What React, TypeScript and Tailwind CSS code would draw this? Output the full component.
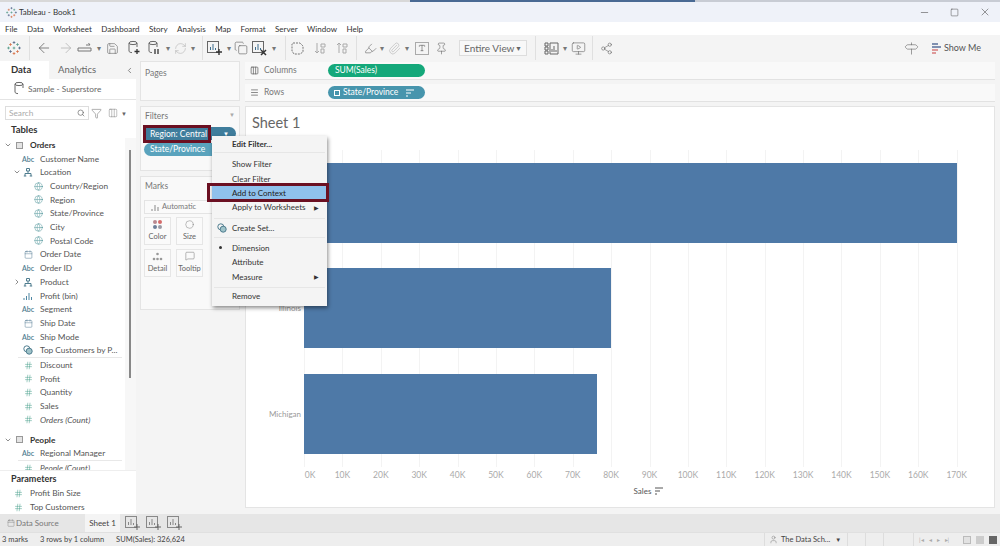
import React from 'react';
import {
  ArrowLeft, ArrowRight, ChevronDown, ChevronLeft, ChevronRight, Copy, Filter, Globe, Hash, Minus, MonitorPlay,
  Paperclip, Pin, RefreshCw, Save, Search, Share2, Signpost, Square, User, X, Calendar, Columns3, Menu as MenuIcon,
  MessageSquare, Circle, Highlighter, Type,
} from 'lucide-react';

const FONT = "font-['Lato','Open_Sans',sans-serif]";

const menus = ['File', 'Data', 'Worksheet', 'Dashboard', 'Story', 'Analysis', 'Map', 'Format', 'Server', 'Window', 'Help'];
const ticks = ['0K', '10K', '20K', '30K', '40K', '50K', '60K', '70K', '80K', '90K', '100K', '110K', '120K', '130K', '140K', '150K', '160K', '170K'];
const bars = [
  { name: '', sales: 170000 },
  { name: 'Illinois', sales: 80000 },
  { name: 'Michigan', sales: 76300 },
];

function Logo({ size = 14 }: { size?: number }) {
  const c = [[7, 1.5], [7, 12.5], [1.5, 7], [12.5, 7], [3.5, 3.5], [10.5, 3.5], [3.5, 10.5], [10.5, 10.5], [7, 7]];
  return (
    <svg width={size} height={size} viewBox="0 0 14 14">
      {c.map(([x, y], i) => (
        <g key={i} stroke={i % 3 === 0 ? '#5b6f8f' : i % 3 === 1 ? '#d9774f' : '#5fa08f'} strokeWidth="0.9">
          <path d={`M${x - 1.3} ${y}H${x + 1.3}M${x} ${y - 1.3}V${y + 1.3}`} />
        </g>
      ))}
    </svg>
  );
}

function Dot() {
  return <span className="w-[12px] flex justify-center text-[8px] text-[#777]">▾</span>;
}

function Sep({ m = 7 }: { m?: number }) {
  return <div className="w-px h-[24px] bg-[#e0e0e0]" style={{ marginLeft: m, marginRight: m }} />;
}

function Db({ badge }: { badge: string }) {
  return (
    <svg width="15" height="16" viewBox="0 0 15 16" fill="none" stroke="#666" strokeWidth="1">
      <ellipse cx="6" cy="3" rx="4" ry="1.6" />
      <path d="M2 3v8c0 1 1.5 1.6 3 1.6M10 3v4" />
      {badge === 'plus' && <path d="M10 9v5M7.5 11.5h5" stroke="#333" strokeWidth="1.3" />}
      {badge === 'pause' && <path d="M8 9v5M11 9v5" stroke="#333" strokeWidth="1.3" />}
    </svg>
  );
}

function ChartBox({ badge, light }: { badge: string; light?: boolean }) {
  return (
    <svg width="17" height="17" viewBox="0 0 17 17" fill="none" stroke={light ? '#888' : '#666'} strokeWidth="1">
      <rect x="1.5" y="1.5" width="11" height="11" />
      <path d="M4.5 10V7M7 10V4M9.5 10V8" stroke={light ? '#888' : '#3f6f8f'} />
      {badge === 'plus' && <path d="M13 9v6M10 12h6" stroke={light ? '#666' : '#333'} strokeWidth={light ? 1 : 1.4} />}
      {badge === 'x' && <path d="M10 10l5 5M15 10l-5 5" stroke="#333" strokeWidth="1.5" />}
    </svg>
  );
}

function SortLines({ className = 'text-white' }: { className?: string }) {
  return (
    <svg width="10" height="8" viewBox="0 0 10 8" className={className} stroke="currentColor" strokeWidth="1">
      <path d="M1 1h8M1 4h5M1 7h2" />
    </svg>
  );
}

function Toolbar() {
  const gray = 'text-[#666]';
  const faint = 'text-[#b5b5b5]';
  return (
    <div className="h-[26px] bg-[#f4f4f4] flex items-center pl-[7px] pr-[19px]">
      <Logo />
      <div className="w-px h-[24px] bg-[#e0e0e0] ml-[8px] mr-[6px]" />
      <div className="flex items-center">
        <ArrowLeft size={16} strokeWidth={1.2} className={gray} />
        <ArrowRight size={16} strokeWidth={1.2} className={`${faint} ml-[6px]`} />
        <svg width="16" height="12" viewBox="0 0 16 12" fill="none" stroke="#777" strokeWidth="1" className="ml-[3px]">
          <path d="M1 6h13v3H1zM9 3h4l-1.500-2" />
        </svg>
      </div>
      <Dot />
      <Save size={13} strokeWidth={1.1} className={`${gray} ml-[1px]`} />
      <div className="w-[8px]" />
      <Db badge="plus" />
      <div className="w-[5px]" />
      <Db badge="pause" />
      <Dot />
      <RefreshCw size={13} strokeWidth={1.1} className={faint} />
      <Dot />
      <Sep m={3} />
      <ChartBox badge="plus" />
      <div className="w-[11px] flex justify-center text-[8px] text-[#777]">▾</div>
      <Copy size={14} strokeWidth={1.1} className={gray} />
      <div className="w-[3px]" />
      <ChartBox badge="x" />
      <Dot />
      <Sep m={4.5} />
      <svg width="15" height="15" viewBox="0 0 15 15" fill="none" stroke="#777" strokeWidth="1" strokeDasharray="2 1">
        <path d="M3 2h7l3 3v6l-3 2H4l-2-3V3z" />
      </svg>
      <svg width="13" height="13" viewBox="0 0 13 13" fill="none" stroke="#aaa" strokeWidth="1" className="ml-[9px]">
        <path d="M3 1v10M1 9l2 2 2-2M7 2h4v3H7zM7 7h3v4H7z" />
      </svg>
      <svg width="13" height="13" viewBox="0 0 13 13" fill="none" stroke="#aaa" strokeWidth="1" className="ml-[9px]">
        <path d="M3 11V1M1 3l2-2 2 2M7 2h4v3H7zM7 7h3v4H7z" />
      </svg>
      <Sep m={6.5} />
      <Highlighter size={13} strokeWidth={1.1} className={`${gray} ml-[1px]`} />
      <div className="w-[10px] flex justify-center text-[8px] text-[#777]">▾</div>
      <Paperclip size={13} strokeWidth={1.1} className={`${faint} ml-[1px]`} />
      <Dot />
      <div className="w-[14px] h-[13px] border border-[#aaa] flex items-center justify-center ml-[2px]">
        <Type size={8} className={gray} />
      </div>
      <Pin size={13} strokeWidth={1.1} className={`${gray} ml-[6px]`} />
      <div className="ml-[11px] w-[68px] h-[16px] bg-[#f8f8f8] border border-[#ddd] flex items-center justify-between pl-[4px] pr-[4px] text-[10px] text-[#666]">
        Entire View <span className="text-[7px]">▼</span>
      </div>
      <Sep m={8} />
      <svg width="15" height="13" viewBox="0 0 15 13" fill="none" stroke="#666" strokeWidth="1">
        <path d="M1 1h3v3H1zM1 5h3v3H1zM1 9h3v3H1zM6 1h8v11H6zM8 10V7M10 10V4M12 10V8" />
      </svg>
      <div className="w-[11px] flex justify-center text-[8px] text-[#777]">▾</div>
      <MonitorPlay size={15} strokeWidth={1} className={`${gray} ml-[1px]`} />
      <Sep m={6} />
      <Share2 size={13} strokeWidth={1.1} className={`${gray} ml-[1px]`} />
      <div className="ml-auto flex items-center">
        <Signpost size={15} strokeWidth={1} className={gray} />
        <svg width="10" height="11" viewBox="0 0 10 11" className="ml-[12px]" strokeWidth="1.500">
          <path d="M1 1h6" stroke="#5a6f9a" />
          <path d="M1 4h9" stroke="#5a6f9a" />
          <path d="M1 7h6" stroke="#d77b7b" />
          <path d="M1 10h4" stroke="#d77b7b" />
        </svg>
        <span className="ml-[3px] text-[9px] text-[#555]">Show Me</span>
      </div>
    </div>
  );
}

function FieldIcon({ kind }: { kind: string }) {
  if (kind === 'abc') return <span className="text-[7px] text-[#4f7d8f] font-semibold">Abc</span>;
  if (kind === 'geo') return <Globe size={9} strokeWidth={1.2} className="text-[#3f8a8f]" />;
  if (kind === 'date') return <Calendar size={9} strokeWidth={1.2} className="text-[#45708a]" />;
  if (kind === 'hier')
    return (
      <svg width="10" height="9" viewBox="0 0 10 9" fill="none" stroke="#4f7d8f" strokeWidth="1">
        <path d="M3.500 .5h3v2.500h-3zM5 3v2M2 8V5.500h6V8M.8 8h2.500M6.700 8h2.500" />
      </svg>
    );
  if (kind === 'bin')
    return (
      <svg width="10" height="8" viewBox="0 0 10 8" stroke="#4f87a3" strokeWidth="1">
        <path d="M1 8V6M3.500 8V4M6 8V1M8.500 8V5" />
      </svg>
    );
  if (kind === 'set')
    return (
      <svg width="10" height="10" viewBox="0 0 10 10" fill="none" stroke="#4f7d8f" strokeWidth="1">
        <circle cx="3.800" cy="3.800" r="3" />
        <circle cx="6.200" cy="6.200" r="3" fill="#9fc3c9" />
      </svg>
    );
  return <Hash size={9} strokeWidth={1.4} className="text-[#4fa38f]" />;
}

function Field({ kind, label, indent = 0, italic, caret }: { kind: string; label: string; indent?: number; italic?: boolean; caret?: 'open' | 'closed' }) {
  return (
    <div className={`h-[13.7px] flex items-center ${indent ? 'pl-[33px]' : 'pl-[23px]'}`}>
      <span className="w-[10px] flex justify-center relative">
        {caret === 'open' && <ChevronDown size={8} className="absolute left-[-10px] top-[0px] text-[#555]" />}
        {caret === 'closed' && <ChevronRight size={8} className="absolute left-[-10px] top-[0px] text-[#555]" />}
        <FieldIcon kind={kind} />
      </span>
      <span className={`ml-[7px] text-[8.3px] whitespace-nowrap text-[#555] ${italic ? 'italic' : ''}`}>{label}</span>
    </div>
  );
}

function TableHead({ label }: { label: string }) {
  return (
    <div className="h-[14px] flex items-center pl-[4px]">
      <ChevronDown size={8} className="text-[#555]" />
      <div className="ml-[4px] w-[7px] h-[7px] border border-[#999] bg-[#e4e4e4]" />
      <span className="ml-[7px] text-[8.3px] font-bold text-[#333]">{label}</span>
    </div>
  );
}

function DataPane() {
  return (
    <div className="w-[136px] shrink-0 flex flex-col bg-white relative">
      <div className="h-[18px] flex items-center text-[9.5px] bg-[#f4f4f4]">
        <div className="w-[49px] h-full bg-white flex items-center pl-[11px] font-bold text-[#333]">Data</div>
        <span className="ml-[9px] text-[#666]">Analytics</span>
        <ChevronLeft size={9} className="ml-auto mr-[2px] text-[#666]" />
      </div>
      <div className="h-[21px] flex items-center pl-[13px] border-b border-[#e4e4e4] text-[8.3px] text-[#666]">
        <Db badge="" />
        <span>Sample - Superstore</span>
      </div>
      <div className="h-[22px] flex items-center pl-[5px] pt-[4px]">
        <div className="w-[84px] h-[14px] border border-[#ddd] flex items-center justify-between px-[3px] text-[8.3px] text-[#aaa]">
          Search <Search size={8} className="text-[#666]" />
        </div>
        <Filter size={11} strokeWidth={1} className="ml-[2px] text-[#555]" />
        <Columns3 size={10} strokeWidth={1} className="ml-[6px] text-[#666]" />
        <span className="ml-[3px] text-[6px] text-[#666]">▼</span>
      </div>
      <div className="h-[16px] pl-[11px] flex items-center text-[9.5px] font-bold text-[#333]">Tables</div>
      <div className="flex-1 overflow-hidden relative">
        <div className="absolute right-0 top-0 bottom-0 w-[11px] bg-[#f7f7f7]">
          <div className="ml-[4px] mt-[12px] h-[228px] w-[2px] bg-[#888]" />
        </div>
        <TableHead label="Orders" />
        <Field kind="abc" label="Customer Name" />
        <Field kind="hier" label="Location" caret="open" />
        <Field kind="geo" label="Country/Region" indent={1} />
        <Field kind="geo" label="Region" indent={1} />
        <Field kind="geo" label="State/Province" indent={1} />
        <Field kind="geo" label="City" indent={1} />
        <Field kind="geo" label="Postal Code" indent={1} />
        <Field kind="date" label="Order Date" />
        <Field kind="abc" label="Order ID" />
        <Field kind="hier" label="Product" caret="closed" />
        <Field kind="bin" label="Profit (bin)" />
        <Field kind="abc" label="Segment" />
        <Field kind="date" label="Ship Date" />
        <Field kind="abc" label="Ship Mode" />
        <Field kind="set" label="Top Customers by P..." />
        <div className="ml-[18px] mr-[14px] h-px bg-[#e8e8e8]" />
        <Field kind="num" label="Discount" />
        <Field kind="num" label="Profit" />
        <Field kind="num" label="Quantity" />
        <Field kind="num" label="Sales" />
        <Field kind="num" label="Orders (Count)" italic />
        <div className="h-[6px]" />
        <TableHead label="People" />
        <Field kind="abc" label="Regional Manager" />
        <div className="ml-[18px] mr-[14px] h-px bg-[#e8e8e8]" />
        <Field kind="num" label="People (Count)" italic />
      </div>
      <div className="h-[44px] shrink-0 border-t border-[#eee] bg-white">
        <div className="h-[15px] pl-[11px] flex items-center text-[9px] font-bold text-[#333]">Parameters</div>
        <div className="h-[14px] pl-[14px] flex items-center text-[8.3px] text-[#555]">
          <FieldIcon kind="num" />
          <span className="ml-[7px]">Profit Bin Size</span>
        </div>
        <div className="h-[14px] pl-[14px] flex items-center text-[8.3px] text-[#555]">
          <FieldIcon kind="num" />
          <span className="ml-[7px]">Top Customers</span>
        </div>
      </div>
    </div>
  );
}

function MarkCard({ label, icon }: { label: string; icon: React.ReactNode }) {
  return (
    <div className="w-[27px] h-[28px] border border-[#e6e6e6] bg-[#fafafa] flex flex-col items-center justify-center gap-[2px] text-[7.5px] text-[#666]">
      {icon}
      <span>{label}</span>
    </div>
  );
}

function SidePanels() {
  return (
    <div className="w-[107px] shrink-0 bg-[#f4f4f4] pl-[4px] pr-[3px] flex flex-col">
      <div className="h-[40px] bg-[#f9f9f9] border border-[#e4e4e4] pl-[4px] pt-[5px] text-[8.5px] text-[#777]">Pages</div>
      <div className="mt-[5px] h-[65px] bg-[#f9f9f9] border border-[#e4e4e4] relative">
        <div className="pl-[4px] pt-[3px] h-[20px] text-[8.5px] text-[#777] flex justify-between pr-[4px]">
          Filters <span className="text-[6px] text-[#aaa]">▼</span>
        </div>
        <div className="ml-[4px] w-[91px] h-[13px] rounded-full bg-[#3f7d9c] flex items-center justify-end pr-[7px] text-white text-[6px]">▼</div>
        <div className="ml-[3px] mt-[3px] w-[92px] h-[13px] rounded-full bg-[#5aa3bd] flex items-center pl-[6px] text-[8.5px] text-white">State/Province</div>
        {/* selected pill, red outline sits over the blue one */}
        <div className="absolute left-[2px] top-[18px] w-[68px] h-[18px] border-[3px] border-[#6b1022] bg-[#3f7d9c] flex items-center pl-[4px] text-[8.5px] text-white whitespace-nowrap">
          Region: Central
        </div>
      </div>
      <div className="mt-[5px] h-[134px] bg-[#f9f9f9] border border-[#e4e4e4]">
        <div className="pl-[4px] pt-[3px] h-[23px] text-[8.5px] text-[#777]">Marks</div>
        <div className="ml-[3px] w-[91px] h-[14px] border border-[#e4e4e4] bg-[#fafafa] flex items-center pl-[6px] text-[7.5px] text-[#777]">
          <svg width="8" height="7" viewBox="0 0 8 7" stroke="#888"><path d="M1 7V5M4 7V1M7 7V3" /></svg>
          <span className="ml-[3px]">Automatic</span>
        </div>
        <div className="ml-[3px] mt-[3px] grid grid-cols-[27px_27px] gap-x-[5px] gap-y-[4px]">
          <MarkCard
            label="Color"
            icon={
              <span className="grid grid-cols-2 gap-[1px]">
                <i className="w-[4px] h-[4px] rounded-full bg-[#b9888f]" />
                <i className="w-[4px] h-[4px] rounded-full bg-[#d46a6a]" />
                <i className="w-[4px] h-[4px] rounded-full bg-[#6d7f99]" />
                <i className="w-[4px] h-[4px] rounded-full bg-[#9a9aa5]" />
              </span>
            }
          />
          <MarkCard label="Size" icon={<Circle size={9} strokeWidth={1.1} className="text-[#666]" />} />
          <MarkCard
            label="Detail"
            icon={
              <svg width="11" height="9" viewBox="0 0 11 9" fill="#999">
                <circle cx="5.500" cy="2" r="1.300" /><circle cx="2" cy="7" r="1.300" /><circle cx="5.500" cy="7" r="1.300" /><circle cx="9" cy="7" r="1.300" />
              </svg>
            }
          />
          <MarkCard label="Tooltip" icon={<MessageSquare size={10} strokeWidth={1.1} className="text-[#666]" />} />
        </div>
      </div>
    </div>
  );
}

function Shelf({ icon, label, pill, color, sorted }: { icon: React.ReactNode; label: string; pill: string; color: string; sorted?: boolean }) {
  return (
    <div className="h-[18px] shrink-0 bg-[#f9f9f9] border-b border-[#e2e2e2] flex items-center">
      <div className="w-[83px] flex items-center pl-[5px] text-[8.5px] text-[#777]">
        {icon}
        <span className="ml-[5px]">{label}</span>
      </div>
      <div className={`w-[97px] h-[13px] rounded-full flex items-center text-[8.5px] text-white ${color} ${sorted ? 'pl-[5px]' : 'pl-[7px]'}`}>
        {sorted && <span className="w-[6px] h-[6px] border border-white mr-[3px] ml-[1px]" />}
        <span>{pill}</span>
        {sorted && <SortLines className="ml-[7px] text-white" />}
      </div>
    </div>
  );
}

function Chart() {
  return (
    <div className="flex-1 bg-white border border-[#e4e4e4] flex flex-col">
      <div className="h-[28px] pl-[6px] pt-[7px] text-[14.5px] text-[#666] leading-[18px]">Sheet 1</div>
      <div className="flex-1 flex flex-col">
        <div className="h-[316.5px] flex mt-[15px]">
          <div className="w-[58px] text-[8px] text-[#999] flex flex-col pr-[3px]">
            {bars.map(b => (
              <div key={b.name} className="h-[105.5px] flex items-center justify-end">{b.name}</div>
            ))}
          </div>
          <div className="flex-1 relative flex flex-col">
            {/* light grid lines behind the bars */}
            <div className="absolute inset-0 flex">
              {ticks.map(t => (
                <div key={t} className="w-[38.4px] shrink-0 border-l border-[#f3f3f3]" />
              ))}
            </div>
            {bars.map(b => (
              <div key={b.name} className="h-[105.5px] flex items-center relative">
                <div className="h-[80px] bg-[#4e79a7]" style={{ width: (b.sales / 10000) * 38.4 }} />
              </div>
            ))}
          </div>
        </div>
        <div className="ml-[38.800px] flex h-[14px] mt-[2px] text-[8.5px] text-[#aaa]">
          {ticks.map(t => (
            <div key={t} className="w-[38.4px] shrink-0 flex justify-center">
              <span className={t === '0K' ? 'ml-[12px]' : ''}>{t}</span>
            </div>
          ))}
        </div>
        <div className="ml-[58px] mt-[1px] flex items-center justify-center h-[14px] text-[8px] text-[#555]">
          <span className="mr-[3px]">Sales</span>
          <SortLines className="text-[#555]" />
        </div>
      </div>
    </div>
  );
}

function ContextMenu() {
  const Item = ({ label, bold, arrow, mark, h = 14.4 }: { label: string; bold?: boolean; arrow?: boolean; mark?: React.ReactNode; h?: number }) => (
    <div className="flex items-center pl-[20px] pr-[8px] relative text-[8px] text-[#333]" style={{ height: h }}>
      {mark && <span className="absolute left-[5px] top-0 bottom-0 flex items-center">{mark}</span>}
      <span className={bold ? 'font-bold' : ''}>{label}</span>
      {arrow && <span className="ml-auto text-[6px] text-[#333]">▶</span>}
    </div>
  );
  const Line = () => <div className="h-px bg-[#e6e6e6] mx-[2px]" />;
  return (
    <div className="absolute left-[212px] top-[136px] w-[115px] h-[170px] bg-[#f4f4f4] shadow-[1px_2px_4px_rgba(0,0,0,0.45)]">
      <Item label="Edit Filter..." bold h={16} />
      <Line />
      <div className="h-[4px]" />
      <Item label="Show Filter" />
      <Item label="Clear Filter" />
      <div className="h-[14.4px] bg-[#8fc1ec] flex items-center pl-[20px] text-[8px] text-[#222]">Add to Context</div>
      <Item label="Apply to Worksheets" arrow />
      <div className="h-[3px]" />
      <Line />
      <Item label="Create Set..." mark={<FieldIcon kind="set" />} h={18} />
      <Line />
      <div className="h-[3px]" />
      <Item label="Dimension" mark={<span className="ml-[2px] block w-[3px] h-[3px] rounded-full bg-[#333]" />} />
      <Item label="Attribute" />
      <Item label="Measure" arrow />
      <div className="h-[3px]" />
      <Line />
      <Item label="Remove" h={17} />
      {/* red callout round the highlighted row */}
      <div className="absolute left-[-5px] top-[47px] w-[122px] h-[19px] border-[3px] border-[#6b1022]" />
    </div>
  );
}

export default function App() {
  return (
    <div className={`${FONT} w-[1000px] h-[546px] overflow-hidden flex flex-col relative bg-white`}>
      <div className="h-[2px] flex bg-white">
        <div className="w-[410px] bg-[#d8d8d8]" />
        <div className="w-[285px] bg-[#4a6a94]" />
        <div className="flex-1 bg-[#c8ccd4]" />
      </div>
      <div className="h-[20px] bg-[#eff2f9] flex items-center pl-[6px] text-[8px] text-[#333]">
        <Logo size={11} />
        <span className="ml-[2px]">Tableau - Book1</span>
        <div className="ml-auto flex items-center text-[#444] pr-[9px] gap-[20px]">
          <Minus size={11} strokeWidth={1.2} />
          <Square size={9} strokeWidth={1.3} />
          <X size={12} strokeWidth={1.1} />
        </div>
      </div>
      <div className="h-[13px] bg-white flex items-center pl-[5px] gap-[9.500px] text-[8px] text-[#333]">
        {menus.map(m => (
          <span key={m}>{m}</span>
        ))}
      </div>
      <Toolbar />
      <div className="flex-1 min-h-0 flex bg-[#f4f4f4]">
        <DataPane />
        <SidePanels />
        <div className="flex-1 flex flex-col pr-[5px] pl-[2px] pt-[1px] pb-[6px] gap-[4px]">
          <Shelf icon={<Columns3 size={9} className="text-[#666]" />} label="Columns" pill="SUM(Sales)" color="bg-[#14a87a]" />
          <Shelf icon={<MenuIcon size={9} className="text-[#666]" />} label="Rows" pill="State/Province" color="bg-[#4795ad]" sorted />
          <Chart />
        </div>
      </div>
      <div className="h-[18px] bg-[#e6e6e6] flex items-center text-[8px] text-[#777]">
        <div className="w-[85px] h-full flex items-center pl-[7px]">
          <Calendar size={8} strokeWidth={1.2} className="text-[#777]" />
          <span className="ml-[1px]">Data Source</span>
        </div>
        <div className="w-[35px] h-full bg-[#f4f4f4] flex items-center justify-center text-[#444]">Sheet 1</div>
        <div className="ml-[4px] flex items-center gap-[4px]">
          <ChartBox badge="plus" light />
          <ChartBox badge="plus" light />
          <ChartBox badge="plus" light />
        </div>
      </div>
      <div className="h-[14px] bg-[#eeeeee] border-t border-[#e0e0e0] flex items-center text-[7.5px] text-[#444] pl-[2px]">
        <span>3 marks</span>
        <span className="ml-[12px]">3 rows by 1 column</span>
        <span className="ml-[12px]">SUM(Sales): 326,624</span>
        <div className="ml-auto flex items-center h-full">
          <div className="w-[83px] h-full border-l border-[#ddd] flex items-center pl-[4px]">
            <User size={9} strokeWidth={1.1} className="text-[#666]" />
            <span className="ml-[3px] whitespace-nowrap">The Data Sch...</span>
            <span className="ml-[5px] text-[6px]">▼</span>
          </div>
          <div className="w-[18px] h-full border-l border-[#ddd]" />
          <div className="w-[18px] h-full border-l border-[#ddd]" />
          <div className="w-[30px] h-full border-l border-[#ddd]" />
          <div className="w-[47px] h-full border-l border-[#ddd] flex items-center gap-[5px] pl-[5px] text-[6px] text-[#aaa]">
            <span>|◂</span><span>◂</span><span>▸</span><span>▸|</span>
          </div>
          <div className="flex items-center gap-[5px] px-[3px]">
            <i className="w-[8px] h-[8px] bg-[#e2e2e2] border border-[#bbb]" />
            <i className="w-[8px] h-[8px] bg-[#ccc]" />
            <i className="w-[8px] h-[8px] bg-[#666]" />
          </div>
        </div>
      </div>
      <ContextMenu />
    </div>
  );
}
